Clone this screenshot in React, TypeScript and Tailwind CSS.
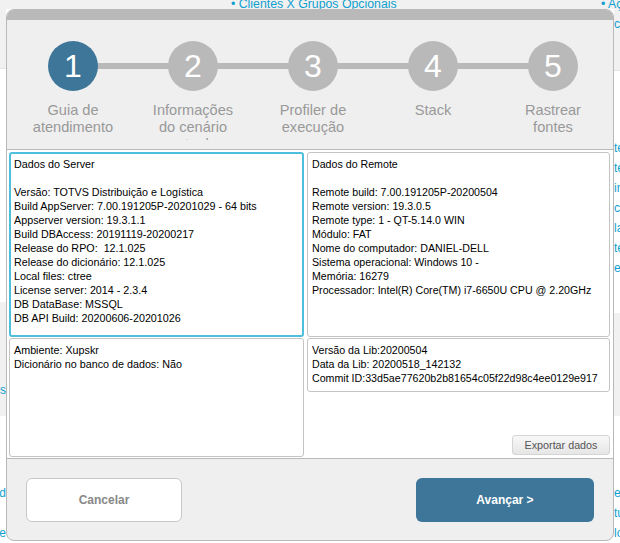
const steps = [
  { n: 1, label: 'Guia de atendimento' },
  { n: 2, label: 'Informações do cenário atual' },
  { n: 3, label: 'Profiler de execução' },
  { n: 4, label: 'Stack' },
  { n: 5, label: 'Rastrear fontes' },
];

const serverLines = [
  'Dados do Server',
  '',
  'Versão: TOTVS Distribuição e Logística',
  'Build AppServer: 7.00.191205P-20201029 - 64 bits',
  'Appserver version: 19.3.1.1',
  'Build DBAccess: 20191119-20200217',
  'Release do RPO:  12.1.025',
  'Release do dicionário: 12.1.025',
  'Local files: ctree',
  'License server: 2014 - 2.3.4',
  'DB DataBase: MSSQL',
  'DB API Build: 20200606-20201026',
];

const remoteLines = [
  'Dados do Remote',
  '',
  'Remote build: 7.00.191205P-20200504',
  'Remote version: 19.3.0.5',
  'Remote type: 1 - QT-5.14.0 WIN',
  'Módulo: FAT',
  'Nome do computador: DANIEL-DELL',
  'Sistema operacional: Windows 10 -',
  'Memória: 16279',
  'Processador: Intel(R) Core(TM) i7-6650U CPU @ 2.20GHz',
];

const Lines = ({ lines, narrow }: { lines: string[]; narrow?: boolean }) => (
  <div className={narrow ? 'whitespace-pre text-[10.65px] leading-[14px] text-black' : 'whitespace-pre text-[10.75px] leading-[14px] text-black'}>
    {lines.map((line, i) => (
      <div key={i} className="h-[14px]">{line}</div>
    ))}
  </div>
);

export default function App() {
  return (
    <div className="relative flex h-[543px] w-[620px] flex-col overflow-hidden bg-white font-['Liberation_Sans',Arial,sans-serif] text-[12px] text-[#0f9fcf]">
      {/* Page behind the dialog */}
      <div className="relative h-[9px] shrink-0 whitespace-nowrap bg-[#f1f1f1] text-[12.3px] leading-[14px]">
        <div className="mt-[-3px] flex">
          <span className="ml-[231px] w-[370px] shrink-0">• Clientes X Grupos Opcionais</span>
          <span className="shrink-0">• Ações</span>
        </div>
      </div>
      <div className="flex flex-1 justify-between">
        <div className="flex w-[6px] flex-col items-end overflow-hidden leading-[14px]">
          <div className="h-[59px] w-[6px] shrink-0 bg-[#f1f1f1]" />
          <div className="h-[234px] w-[6px] shrink-0 border-t border-[#e4e4e4]" />
          <div className="flex h-[114px] w-[6px] shrink-0 justify-end bg-[#f1f1f1] pt-[81px]">
            <span className="shrink-0">es</span>
          </div>
          <div className="flex w-[6px] shrink-0 flex-col items-end pt-[70px]">
            <span className="shrink-0">d</span>
            <span className="mt-[26px] shrink-0">e</span>
          </div>
        </div>
        <div className="flex w-[6px] flex-col overflow-hidden leading-[20px]">
          <div className="h-[61px] shrink-0 whitespace-nowrap bg-[#f1f1f1] pt-[5px]">ca</div>
          <div className="h-[243px] shrink-0 whitespace-nowrap border-t border-[#e4e4e4] pt-[67px]">
            <div>te</div>
            <div>te</div>
            <div>in</div>
            <div>co</div>
            <div>la</div>
            <div>te</div>
            <div>e</div>
          </div>
          <div className="h-[103px] shrink-0 bg-[#f1f1f1]" />
          <div className="shrink-0 whitespace-nowrap pt-[67px]">
            <div>e</div>
            <div>tu</div>
            <div>lo</div>
          </div>
        </div>
      </div>

      {/* Dialog */}
      <div className="absolute left-[6px] top-[9px] flex h-[532px] w-[608px] flex-col overflow-hidden rounded-[8px] border border-[#b9b9b9] bg-[#efefef]">
        <div className="h-[10px] shrink-0 bg-[#b9b9b9]" />

        {/* Stepper */}
        <div className="relative h-[129px] shrink-0 overflow-hidden">
          <div className="absolute left-[60px] right-[60px] top-[43px] h-[6px] bg-[#b9b9b9]" />
          <div className="relative flex pl-[6px] pt-[21px]">
            {steps.map((s) => (
              <div key={s.n} className="flex w-[120px] flex-col items-center">
                <div
                  className={
                    s.n === 1
                      ? 'flex h-[50px] w-[50px] items-center justify-center rounded-full bg-[#3d7699] text-[32px] text-white'
                      : 'flex h-[50px] w-[50px] items-center justify-center rounded-full bg-[#b9b9b9] text-[32px] text-white'
                  }
                >
                  {s.n}
                </div>
                <div className="mt-[11px] h-[38px] w-[92px] overflow-hidden text-center text-[14.6px] leading-[17px] text-[#999999]">
                  {s.label}
                </div>
              </div>
            ))}
          </div>
        </div>

        {/* Panels */}
        <div className="flex h-[310px] shrink-0 gap-[3px] border-y border-[#b9b9b9] bg-white pb-[1px] pl-[2px] pr-[3px] pt-[2px]">
          <div className="flex w-[295px] flex-col gap-[1px]">
            <div className="h-[185px] rounded-[3px] border-2 border-[#4dbfdc] px-[3px] py-[3px]">
              <Lines lines={serverLines} />
            </div>
            <div className="flex-1 rounded-[3px] border border-[#c4c4c4] px-[4px] pt-[4px]">
              <Lines lines={['Ambiente: Xupskr', 'Dicionário no banco de dados: Não']} />
            </div>
          </div>
          <div className="flex flex-1 flex-col gap-[1px]">
            <div className="h-[185px] rounded-[3px] border border-[#c4c4c4] px-[4px] py-[4px]">
              <Lines narrow lines={remoteLines} />
            </div>
            <div className="h-[54px] rounded-[3px] border border-[#c4c4c4] px-[4px] pt-[4px]">
              <Lines
                narrow
                lines={[
                  'Versão da Lib:20200504',
                  'Data da Lib: 20200518_142132',
                  'Commit ID:33d5ae77620b2b81654c05f22d98c4ee0129e917',
                ]}
              />
            </div>
            <div className="flex flex-1 items-end justify-end pb-[2px]">
              <button className="h-[20px] w-[98px] rounded-[3px] border border-[#d4d4d4] bg-gradient-to-b from-[#f8f8f8] to-[#e6e6e6] text-[10.75px] text-[#555555]">
                Exportar dados
              </button>
            </div>
          </div>
        </div>

        {/* Footer */}
        <div className="flex flex-1 items-start justify-between px-[19px] pt-[19px]">
          <button className="h-[44px] w-[156px] rounded-[6px] border border-[#c8c8c8] bg-white text-[12px] font-bold text-[#888888]">
            Cancelar
          </button>
          <button className="h-[44px] w-[178px] rounded-[6px] bg-[#3d7699] text-[12px] font-bold text-white">
            Avançar &gt;
          </button>
        </div>
      </div>
    </div>
  );
}
